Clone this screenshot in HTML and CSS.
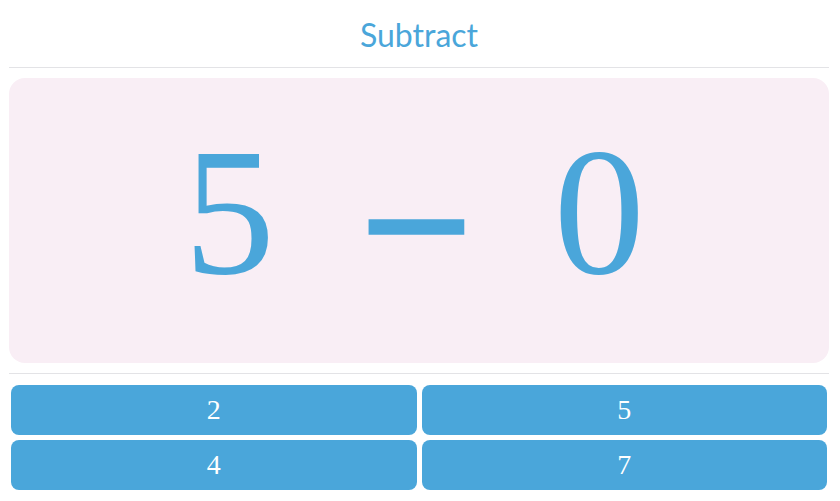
FILE: index.html
```html
<!DOCTYPE html>
<html>
<head>
<meta charset="utf-8">
<link rel="stylesheet" href="styles.css">
</head>
<body>
<div class="app">
  <header class="header"><h1 class="title">Subtract</h1></header>
  <section class="problem">
    <span class="num">5</span>
    <span class="op">&minus;</span>
    <span class="num">0</span>
  </section>
  <div class="answers">
    <button class="answer">2</button>
    <button class="answer">5</button>
    <button class="answer">4</button>
    <button class="answer">7</button>
  </div>
</div>
</body>
</html>
```

FILE: styles.css
```css
html, body {
  margin: 0;
  padding: 0;
  background: #ffffff;
}
.app {
  margin: 0 11px 0 9px;
  display: flex;
  flex-direction: column;
}
.header {
  height: 67px;
  border-bottom: 1px solid #e3e3e6;
  display: flex;
  align-items: center;
  justify-content: center;
}
.title {
  margin: 0;
  font-family: Lato, "Noto Sans", sans-serif;
  font-weight: 400;
  font-size: 32px;
  color: #4aa6da;
  line-height: 1;
  padding-top: 2px;
}
.problem {
  margin-top: 10px;
  height: 285px;
  background: #f9eef5;
  border-radius: 16px;
  display: flex;
  align-items: center;
  justify-content: flex-start;
  font-family: "Liberation Serif", "Times New Roman", serif;
  font-size: 182px;
  line-height: 1;
  color: #4aa6da;
  padding-left: 175px;
  padding-bottom: 18px;
  box-sizing: border-box;
}
.op {
  display: inline-block;
  margin: 0 86px 0 90px;
  transform: translateY(14px) scale(1.13, 1.7);
}
.answers {
  margin-top: 10px;
  border-top: 1px solid #e3e3e6;
  padding: 11px 2px 0 2px;
  display: grid;
  grid-template-columns: 1fr 1fr;
  grid-auto-rows: 50px;
  column-gap: 5px;
  row-gap: 5px;
}
.answer {
  border: none;
  border-radius: 8px;
  background: #4aa6da;
  color: #ffffff;
  font-family: "Liberation Serif", "Times New Roman", serif;
  font-size: 28px;
  padding: 0;
  margin: 0;
}
```
